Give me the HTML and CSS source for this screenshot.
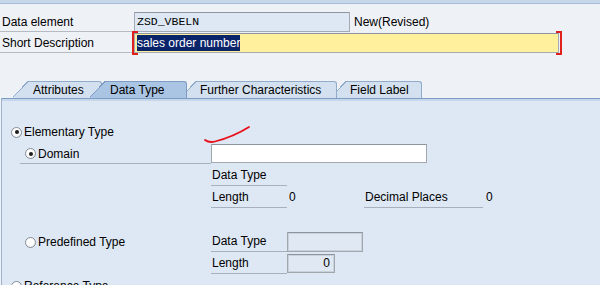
FILE: index.html
```html
<!DOCTYPE html>
<html lang="en">
<head>
    <meta charset="UTF-8">
    <title>Data element ZSD_VBELN</title>
    <link rel="stylesheet" href="styles.css">
</head>
<body>

    <div class="topbar"></div>

    <div class="head">
        <div class="hrow">
            <span class="hlabel">Data element</span>
            <span class="hinput name">ZSD_VBELN</span>
            <span class="status">New(Revised)</span>
        </div>
        <div class="hrow">
            <span class="hlabel">Short Description</span>
            <span class="req">
                <span class="hinput desc"><span class="sel">sales order number</span></span>
            </span>
        </div>
    </div>

    <div class="tabs">
        <div class="tab t1">Attributes</div>
        <div class="tab t2 active">Data Type</div>
        <div class="tab t3">Further Characteristics</div>
        <div class="tab t4">Field Label</div>
    </div>

    <div class="panel">
        <div class="row top">
            <span class="radio on"></span>Elementary Type
        </div>
        <div class="row sub">
            <span class="opt line"><span class="radio on"></span>Domain</span>
            <span class="field white dom"></span>
        </div>
        <div class="row sub">
            <span class="spacer"></span>
            <span class="lab">Data Type</span>
        </div>
        <div class="row sub">
            <span class="spacer"></span>
            <span class="lab">Length</span>
            <span class="val">0</span>
            <span class="lab dec">Decimal Places</span>
            <span class="val dval">0</span>
        </div>
        <div class="row"></div>
        <div class="row sub">
            <span class="opt"><span class="radio"></span>Predefined Type</span>
            <span class="lab">Data Type</span>
            <span class="field grey dtype"></span>
        </div>
        <div class="row sub">
            <span class="spacer"></span>
            <span class="lab">Length</span>
            <span class="field grey len">0</span>
        </div>
        <div class="row top">
            <span class="radio"></span>Reference Type
        </div>

        <!-- red pen mark drawn over the screen -->
        <svg class="mark" width="52" height="24" viewBox="0 0 52 24">
            <path d="M4 18 Q8 21 14 19.5 Q32 15 48 5" fill="none" stroke="#e8101a" stroke-width="1.8" stroke-linecap="round"/>
        </svg>
    </div>

</body>
</html>
```

FILE: styles.css
```css
* {
    margin: 0;
    padding: 0;
    box-sizing: border-box;
}

body {
    width: 600px;
    height: 285px;
    overflow: hidden;
    background: #eef1f6;
    color: #000;
    font-family: 'Liberation Sans', Arial, sans-serif;
    font-size: 12px;
}

.topbar {
    height: 4px;
    background: #c6d7ea;
    border-bottom: 1px solid #a9bfd9;
}

/* header fields */
.head {
    padding-top: 8px;
    display: flex;
    flex-direction: column;
    gap: 1px;
}

.hrow {
    display: flex;
    align-items: center;
    height: 20px;
}

.hlabel {
    width: 134px;
    height: 20px;
    line-height: 19px;
    padding-top: 1px;
    padding-left: 2px;
    border-bottom: 1px solid #b5bac3;
}

.hinput {
    display: block;
    height: 20px;
    line-height: 18px;
    border: 1px solid #a4abb4;
    border-top-color: #8f969f;
}

.name {
    width: 216px;
    padding-left: 2px;
    background: #dde8f4;
    font-family: 'Liberation Mono', 'Courier New', monospace;
    font-size: 11.5px;
}

.status {
    margin-left: 4px;
}

.req {
    position: relative;
}

.req::before,
.req::after {
    content: '';
    position: absolute;
    top: -2px;
    bottom: -2px;
    width: 4px;
    border: 2px solid #e0201c;
}

.req::before {
    left: -2px;
    border-right: none;
}

.req::after {
    right: -3px;
    border-left: none;
}

.desc {
    width: 425px;
    padding-left: 2px;
    background: #fff09e;
}

.sel {
    background: #0a246a;
    color: #fff;
    padding: 1px 0;
}

/* tab strip */
.tabs {
    display: flex;
    margin-top: 28px;
    padding-left: 29px;
    height: 17px;
}

.tab {
    position: relative;
    height: 17px;
    line-height: 16px;
    padding-left: 4px;
    white-space: nowrap;
    background: #d3e0ef;
    border-top: 1px solid #91abcb;
    border-right: 1px solid #91abcb;
    border-top-right-radius: 3px;
}

.tab::before {
    content: '';
    position: absolute;
    left: -16px;
    top: -1px;
    width: 16px;
    height: 17px;
    background: linear-gradient(to bottom right, transparent calc(50% - 1px), #91abcb calc(50% - 1px), #91abcb 50%, #d3e0ef 50%);
}

.tab.active {
    background: #aac5e4;
}

.tab.active::before {
    background: linear-gradient(to bottom right, transparent calc(50% - 1px), #7f9dc4 calc(50% - 1px), #7f9dc4 50%, #aac5e4 50%);
}

.t1 { width: 73px; z-index: 3; }
.t2 { width: 81px; margin-left: 4px; z-index: 4; border-color: #7f9dc4; }
.t3 { width: 140px; margin-left: 10px; padding-left: 3px; z-index: 2; }
.t4 { width: 75px; margin-left: 10px; padding-left: 3px; z-index: 1; }

/* tab page */
.panel {
    position: relative;
    margin-left: 1px;
    height: 200px;
    padding-top: 23px;
    display: flex;
    flex-direction: column;
    gap: 2px;
    background: #dee8f4;
    border-top: 1px solid #7d9cc3;
    border-left: 1px solid #9db3cf;
    box-shadow: inset 0 2px 0 #c6d7eb;
}

.row {
    display: flex;
    align-items: stretch;
    height: 20px;
    flex-shrink: 0;
}

.row.top {
    align-items: center;
    padding-left: 9px;
}

.row.sub {
    padding-left: 18px;
}

.radio {
    width: 11px;
    height: 11px;
    margin-right: 2px;
    border-radius: 50%;
    border: 1px solid #878d95;
    background: radial-gradient(circle at 40% 40%, #fff 40%, #e2e4e8 100%);
    display: flex;
    align-items: center;
    justify-content: center;
}

.radio.on::after {
    content: '';
    width: 4px;
    height: 4px;
    border-radius: 50%;
    background: #1c1c1c;
}

.opt {
    width: 191px;
    display: flex;
    align-items: center;
    padding-left: 5px;
}

.opt.line {
    border-bottom: 1px solid #a7b1be;
}

.spacer {
    width: 191px;
}

.lab {
    width: 76px;
    padding-left: 1px;
    line-height: 19px;
    border-bottom: 1px solid #a7b1be;
}

.lab.dec {
    width: 119px;
}

.val {
    width: 77px;
    padding-left: 2px;
    line-height: 19px;
}

.val.dval {
    padding-left: 3px;
}

.field {
    display: block;
    height: 19px;
    border: 1px solid #a2a7ae;
    border-top-color: #8e949c;
}

.field.white {
    background: #fff;
}

.field.grey {
    background: #dfe8f3;
    box-shadow: inset 0 0 0 1px #c9d2dc;
}

.dom {
    width: 216px;
}

.dtype {
    width: 76px;
    height: 20px;
}

.len {
    width: 48px;
    text-align: right;
    padding-right: 4px;
    line-height: 17px;
}

.mark {
    position: absolute;
    left: 199px;
    top: 23px;
}
```
